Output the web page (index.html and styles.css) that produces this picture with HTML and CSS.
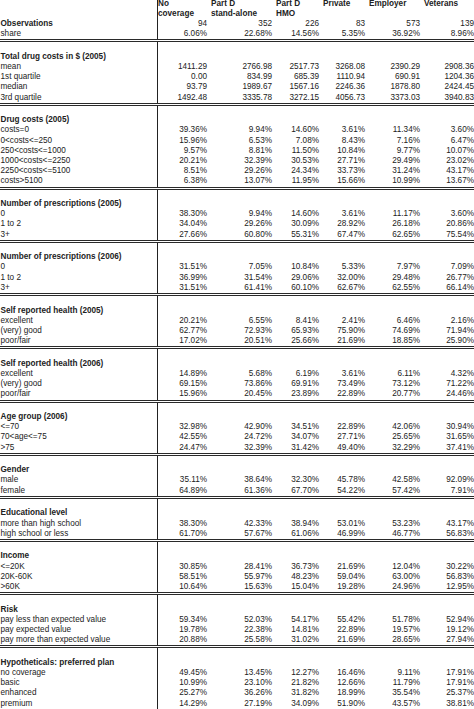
FILE: index.html
```html
<!DOCTYPE html>
<html lang="en">
<head>
<meta charset="utf-8">
<title>Descriptive statistics by coverage</title>
<link rel="stylesheet" href="styles.css">
</head>
<body>
<div class="sheet">
  <div class="row"><span class="lab"></span><span class="c h first">No</span><span class="c h">Part D</span><span class="c h">Part D</span><span class="c h">Private</span><span class="c h">Employer</span><span class="c h">Veterans</span></div>
  <div class="row"><span class="lab"></span><span class="c h first">coverage</span><span class="c h">stand-alone</span><span class="c h">HMO</span><span class="c h"></span><span class="c h"></span><span class="c h"></span></div>
  <div class="row"><span class="lab b">Observations</span><span class="c">94</span><span class="c">352</span><span class="c">226</span><span class="c">83</span><span class="c">573</span><span class="c">139</span></div>
  <div class="row end"><span class="lab">share</span><span class="c">6.06%</span><span class="c">22.68%</span><span class="c">14.56%</span><span class="c">5.35%</span><span class="c">36.92%</span><span class="c">8.96%</span></div>

  <div class="row gap"><span class="lab"></span><span class="c"></span><span class="c"></span><span class="c"></span><span class="c"></span><span class="c"></span><span class="c"></span></div>
  <div class="row"><span class="lab b">Total drug costs in $ (2005)</span><span class="c"></span><span class="c"></span><span class="c"></span><span class="c"></span><span class="c"></span><span class="c"></span></div>
  <div class="row"><span class="lab">mean</span><span class="c">1411.29</span><span class="c">2766.98</span><span class="c">2517.73</span><span class="c">3268.08</span><span class="c">2390.29</span><span class="c">2908.36</span></div>
  <div class="row"><span class="lab">1st quartile</span><span class="c">0.00</span><span class="c">834.99</span><span class="c">685.39</span><span class="c">1110.94</span><span class="c">690.91</span><span class="c">1204.36</span></div>
  <div class="row"><span class="lab">median</span><span class="c">93.79</span><span class="c">1989.67</span><span class="c">1567.16</span><span class="c">2246.36</span><span class="c">1878.80</span><span class="c">2424.45</span></div>
  <div class="row end"><span class="lab">3rd quartile</span><span class="c">1492.48</span><span class="c">3335.78</span><span class="c">3272.15</span><span class="c">4056.73</span><span class="c">3373.03</span><span class="c">3940.83</span></div>

  <div class="row gap"><span class="lab"></span><span class="c"></span><span class="c"></span><span class="c"></span><span class="c"></span><span class="c"></span><span class="c"></span></div>
  <div class="row"><span class="lab b">Drug costs (2005)</span><span class="c"></span><span class="c"></span><span class="c"></span><span class="c"></span><span class="c"></span><span class="c"></span></div>
  <div class="row"><span class="lab">costs=0</span><span class="c">39.36%</span><span class="c">9.94%</span><span class="c">14.60%</span><span class="c">3.61%</span><span class="c">11.34%</span><span class="c">3.60%</span></div>
  <div class="row"><span class="lab">0&lt;costs&lt;=250</span><span class="c">15.96%</span><span class="c">6.53%</span><span class="c">7.08%</span><span class="c">8.43%</span><span class="c">7.16%</span><span class="c">6.47%</span></div>
  <div class="row"><span class="lab">250&lt;costs&lt;=1000</span><span class="c">9.57%</span><span class="c">8.81%</span><span class="c">11.50%</span><span class="c">10.84%</span><span class="c">9.77%</span><span class="c">10.07%</span></div>
  <div class="row"><span class="lab">1000&lt;costs&lt;=2250</span><span class="c">20.21%</span><span class="c">32.39%</span><span class="c">30.53%</span><span class="c">27.71%</span><span class="c">29.49%</span><span class="c">23.02%</span></div>
  <div class="row"><span class="lab">2250&lt;costs&lt;=5100</span><span class="c">8.51%</span><span class="c">29.26%</span><span class="c">24.34%</span><span class="c">33.73%</span><span class="c">31.24%</span><span class="c">43.17%</span></div>
  <div class="row end"><span class="lab">costs&gt;5100</span><span class="c">6.38%</span><span class="c">13.07%</span><span class="c">11.95%</span><span class="c">15.66%</span><span class="c">10.99%</span><span class="c">13.67%</span></div>

  <div class="row gap"><span class="lab"></span><span class="c"></span><span class="c"></span><span class="c"></span><span class="c"></span><span class="c"></span><span class="c"></span></div>
  <div class="row"><span class="lab b">Number of prescriptions (2005)</span><span class="c"></span><span class="c"></span><span class="c"></span><span class="c"></span><span class="c"></span><span class="c"></span></div>
  <div class="row"><span class="lab">0</span><span class="c">38.30%</span><span class="c">9.94%</span><span class="c">14.60%</span><span class="c">3.61%</span><span class="c">11.17%</span><span class="c">3.60%</span></div>
  <div class="row"><span class="lab">1 to 2</span><span class="c">34.04%</span><span class="c">29.26%</span><span class="c">30.09%</span><span class="c">28.92%</span><span class="c">26.18%</span><span class="c">20.86%</span></div>
  <div class="row end"><span class="lab">3+</span><span class="c">27.66%</span><span class="c">60.80%</span><span class="c">55.31%</span><span class="c">67.47%</span><span class="c">62.65%</span><span class="c">75.54%</span></div>

  <div class="row gap"><span class="lab"></span><span class="c"></span><span class="c"></span><span class="c"></span><span class="c"></span><span class="c"></span><span class="c"></span></div>
  <div class="row"><span class="lab b">Number of prescriptions (2006)</span><span class="c"></span><span class="c"></span><span class="c"></span><span class="c"></span><span class="c"></span><span class="c"></span></div>
  <div class="row"><span class="lab">0</span><span class="c">31.51%</span><span class="c">7.05%</span><span class="c">10.84%</span><span class="c">5.33%</span><span class="c">7.97%</span><span class="c">7.09%</span></div>
  <div class="row"><span class="lab">1 to 2</span><span class="c">36.99%</span><span class="c">31.54%</span><span class="c">29.06%</span><span class="c">32.00%</span><span class="c">29.48%</span><span class="c">26.77%</span></div>
  <div class="row end"><span class="lab">3+</span><span class="c">31.51%</span><span class="c">61.41%</span><span class="c">60.10%</span><span class="c">62.67%</span><span class="c">62.55%</span><span class="c">66.14%</span></div>

  <div class="row gap"><span class="lab"></span><span class="c"></span><span class="c"></span><span class="c"></span><span class="c"></span><span class="c"></span><span class="c"></span></div>
  <div class="row"><span class="lab b">Self reported health (2005)</span><span class="c"></span><span class="c"></span><span class="c"></span><span class="c"></span><span class="c"></span><span class="c"></span></div>
  <div class="row"><span class="lab">excellent</span><span class="c">20.21%</span><span class="c">6.55%</span><span class="c">8.41%</span><span class="c">2.41%</span><span class="c">6.46%</span><span class="c">2.16%</span></div>
  <div class="row"><span class="lab">(very) good</span><span class="c">62.77%</span><span class="c">72.93%</span><span class="c">65.93%</span><span class="c">75.90%</span><span class="c">74.69%</span><span class="c">71.94%</span></div>
  <div class="row end"><span class="lab">poor/fair</span><span class="c">17.02%</span><span class="c">20.51%</span><span class="c">25.66%</span><span class="c">21.69%</span><span class="c">18.85%</span><span class="c">25.90%</span></div>

  <div class="row gap"><span class="lab"></span><span class="c"></span><span class="c"></span><span class="c"></span><span class="c"></span><span class="c"></span><span class="c"></span></div>
  <div class="row"><span class="lab b">Self reported health (2006)</span><span class="c"></span><span class="c"></span><span class="c"></span><span class="c"></span><span class="c"></span><span class="c"></span></div>
  <div class="row"><span class="lab">excellent</span><span class="c">14.89%</span><span class="c">5.68%</span><span class="c">6.19%</span><span class="c">3.61%</span><span class="c">6.11%</span><span class="c">4.32%</span></div>
  <div class="row"><span class="lab">(very) good</span><span class="c">69.15%</span><span class="c">73.86%</span><span class="c">69.91%</span><span class="c">73.49%</span><span class="c">73.12%</span><span class="c">71.22%</span></div>
  <div class="row end"><span class="lab">poor/fair</span><span class="c">15.96%</span><span class="c">20.45%</span><span class="c">23.89%</span><span class="c">22.89%</span><span class="c">20.77%</span><span class="c">24.46%</span></div>

  <div class="row gap"><span class="lab"></span><span class="c"></span><span class="c"></span><span class="c"></span><span class="c"></span><span class="c"></span><span class="c"></span></div>
  <div class="row"><span class="lab b">Age group (2006)</span><span class="c"></span><span class="c"></span><span class="c"></span><span class="c"></span><span class="c"></span><span class="c"></span></div>
  <div class="row"><span class="lab">&lt;=70</span><span class="c">32.98%</span><span class="c">42.90%</span><span class="c">34.51%</span><span class="c">22.89%</span><span class="c">42.06%</span><span class="c">30.94%</span></div>
  <div class="row"><span class="lab">70&lt;age&lt;=75</span><span class="c">42.55%</span><span class="c">24.72%</span><span class="c">34.07%</span><span class="c">27.71%</span><span class="c">25.65%</span><span class="c">31.65%</span></div>
  <div class="row end"><span class="lab">&gt;75</span><span class="c">24.47%</span><span class="c">32.39%</span><span class="c">31.42%</span><span class="c">49.40%</span><span class="c">32.29%</span><span class="c">37.41%</span></div>

  <div class="row gap"><span class="lab"></span><span class="c"></span><span class="c"></span><span class="c"></span><span class="c"></span><span class="c"></span><span class="c"></span></div>
  <div class="row"><span class="lab b">Gender</span><span class="c"></span><span class="c"></span><span class="c"></span><span class="c"></span><span class="c"></span><span class="c"></span></div>
  <div class="row"><span class="lab">male</span><span class="c">35.11%</span><span class="c">38.64%</span><span class="c">32.30%</span><span class="c">45.78%</span><span class="c">42.58%</span><span class="c">92.09%</span></div>
  <div class="row end"><span class="lab">female</span><span class="c">64.89%</span><span class="c">61.36%</span><span class="c">67.70%</span><span class="c">54.22%</span><span class="c">57.42%</span><span class="c">7.91%</span></div>

  <div class="row gap"><span class="lab"></span><span class="c"></span><span class="c"></span><span class="c"></span><span class="c"></span><span class="c"></span><span class="c"></span></div>
  <div class="row"><span class="lab b">Educational level</span><span class="c"></span><span class="c"></span><span class="c"></span><span class="c"></span><span class="c"></span><span class="c"></span></div>
  <div class="row"><span class="lab">more than high school</span><span class="c">38.30%</span><span class="c">42.33%</span><span class="c">38.94%</span><span class="c">53.01%</span><span class="c">53.23%</span><span class="c">43.17%</span></div>
  <div class="row end"><span class="lab">high school or less</span><span class="c">61.70%</span><span class="c">57.67%</span><span class="c">61.06%</span><span class="c">46.99%</span><span class="c">46.77%</span><span class="c">56.83%</span></div>

  <div class="row gap"><span class="lab"></span><span class="c"></span><span class="c"></span><span class="c"></span><span class="c"></span><span class="c"></span><span class="c"></span></div>
  <div class="row"><span class="lab b">Income</span><span class="c"></span><span class="c"></span><span class="c"></span><span class="c"></span><span class="c"></span><span class="c"></span></div>
  <div class="row"><span class="lab">&lt;=20K</span><span class="c">30.85%</span><span class="c">28.41%</span><span class="c">36.73%</span><span class="c">21.69%</span><span class="c">12.04%</span><span class="c">30.22%</span></div>
  <div class="row"><span class="lab">20K-60K</span><span class="c">58.51%</span><span class="c">55.97%</span><span class="c">48.23%</span><span class="c">59.04%</span><span class="c">63.00%</span><span class="c">56.83%</span></div>
  <div class="row end"><span class="lab">&gt;60K</span><span class="c">10.64%</span><span class="c">15.63%</span><span class="c">15.04%</span><span class="c">19.28%</span><span class="c">24.96%</span><span class="c">12.95%</span></div>

  <div class="row gap"><span class="lab"></span><span class="c"></span><span class="c"></span><span class="c"></span><span class="c"></span><span class="c"></span><span class="c"></span></div>
  <div class="row"><span class="lab b">Risk</span><span class="c"></span><span class="c"></span><span class="c"></span><span class="c"></span><span class="c"></span><span class="c"></span></div>
  <div class="row"><span class="lab">pay less than expected value</span><span class="c">59.34%</span><span class="c">52.03%</span><span class="c">54.17%</span><span class="c">55.42%</span><span class="c">51.78%</span><span class="c">52.94%</span></div>
  <div class="row"><span class="lab">pay expected value</span><span class="c">19.78%</span><span class="c">22.38%</span><span class="c">14.81%</span><span class="c">22.89%</span><span class="c">19.57%</span><span class="c">19.12%</span></div>
  <div class="row end"><span class="lab">pay more than expected value</span><span class="c">20.88%</span><span class="c">25.58%</span><span class="c">31.02%</span><span class="c">21.69%</span><span class="c">28.65%</span><span class="c">27.94%</span></div>

  <div class="row gap"><span class="lab"></span><span class="c"></span><span class="c"></span><span class="c"></span><span class="c"></span><span class="c"></span><span class="c"></span></div>
  <div class="row"><span class="lab b">Hypotheticals: preferred plan</span><span class="c"></span><span class="c"></span><span class="c"></span><span class="c"></span><span class="c"></span><span class="c"></span></div>
  <div class="row"><span class="lab">no coverage</span><span class="c">49.45%</span><span class="c">13.45%</span><span class="c">12.27%</span><span class="c">16.46%</span><span class="c">9.11%</span><span class="c">17.91%</span></div>
  <div class="row"><span class="lab">basic</span><span class="c">10.99%</span><span class="c">23.10%</span><span class="c">21.82%</span><span class="c">12.66%</span><span class="c">11.79%</span><span class="c">17.91%</span></div>
  <div class="row"><span class="lab">enhanced</span><span class="c">25.27%</span><span class="c">36.26%</span><span class="c">31.82%</span><span class="c">18.99%</span><span class="c">35.54%</span><span class="c">25.37%</span></div>
  <div class="row end"><span class="lab">premium</span><span class="c">14.29%</span><span class="c">27.19%</span><span class="c">34.09%</span><span class="c">51.90%</span><span class="c">43.57%</span><span class="c">38.81%</span></div>
</div>
</body>
</html>
```

FILE: styles.css
```css
html, body {
  margin: 0;
  padding: 0;
  background: #ffffff;
  overflow: hidden;
}

.sheet {
  width: 476px;
  margin-top: -1.5px;
  font-family: "Liberation Sans", Arial, sans-serif;
  font-size: 8.2px;
  color: #222222;
}

.row {
  display: grid;
  grid-template-columns: 157px 52px 65px 47px 46px 55px 54px;
  height: 10.2px;
  line-height: 10.2px;
  white-space: nowrap;
}

.row.end {
  border-bottom: 3px double #2a2a2a;
}

.row.gap {
  height: 9.5px;
}

.lab {
  padding-left: 0.5px;
  overflow: hidden;
}

.b {
  font-weight: bold;
}

.c {
  box-sizing: border-box;
  text-align: right;
  padding-right: 2px;
  overflow: visible;
}

.c:nth-child(2) {
  border-left: 1px solid #222222;
}

.c.h {
  text-align: left;
  padding-left: 2px;
  padding-right: 0;
  font-weight: bold;
}

.c.h.first {
  padding-left: 0;
}
```
